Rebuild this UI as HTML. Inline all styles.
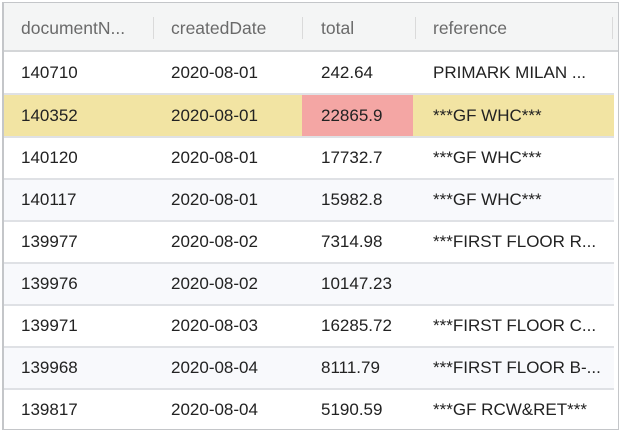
<!DOCTYPE html><html><head><style>
body{margin:0;width:622px;height:433px;background:#fff;font-family:"Liberation Sans",sans-serif;overflow:hidden}
.g{position:absolute;left:2px;top:2px;width:614px;height:426px;border:1px solid #c4c6c9;border-left-width:2px;overflow:hidden}
.h{height:47px;background:#f4f5f5;border-bottom:2px solid #d4d6d8;position:relative;color:#6a6a6a;font-size:17.5px}
.r{height:40px;border-bottom:2px solid #dfe1e5;position:relative;font-size:17px;color:#222;width:610px}
.r.t{height:41px}
.r.a{background:#f8f9fc}
.r.y{background:#f2e4a3}
.c{position:absolute;top:0;bottom:0;line-height:40px;white-space:nowrap}
.r.t .c{line-height:42px}
.h .c{line-height:50px}
.s{position:absolute;top:14px;width:1px;height:22px;background:#dadada}
.p{position:absolute;left:299px;width:111px;top:0;bottom:0;background:#f4a6a4}
</style></head><body><div class="g">
<div class="h"><span class="c" style="left:17px">documentN...</span><span class="s" style="left:149px"></span><span class="c" style="left:167px">createdDate</span><span class="s" style="left:298px"></span><span class="c" style="left:317px">total</span><span class="s" style="left:411px"></span><span class="c" style="left:429px">reference</span><span class="s" style="left:608px"></span></div>
<div class="r t"><span class="c" style="left:17px">140710</span><span class="c" style="left:167px">2020-08-01</span><span class="c" style="left:317px">242.64</span><span class="c" style="left:429px">PRIMARK MILAN ...</span></div>
<div class="r t y"><span class="p" style="left:298px"></span><span class="c" style="left:17px">140352</span><span class="c" style="left:167px">2020-08-01</span><span class="c" style="left:317px">22865.9</span><span class="c" style="left:429px">***GF WHC***</span></div>
<div class="r"><span class="c" style="left:17px">140120</span><span class="c" style="left:167px">2020-08-01</span><span class="c" style="left:317px">17732.7</span><span class="c" style="left:429px">***GF WHC***</span></div>
<div class="r a"><span class="c" style="left:17px">140117</span><span class="c" style="left:167px">2020-08-01</span><span class="c" style="left:317px">15982.8</span><span class="c" style="left:429px">***GF WHC***</span></div>
<div class="r"><span class="c" style="left:17px">139977</span><span class="c" style="left:167px">2020-08-02</span><span class="c" style="left:317px">7314.98</span><span class="c" style="left:429px">***FIRST FLOOR R...</span></div>
<div class="r a"><span class="c" style="left:17px">139976</span><span class="c" style="left:167px">2020-08-02</span><span class="c" style="left:317px">10147.23</span></div>
<div class="r"><span class="c" style="left:17px">139971</span><span class="c" style="left:167px">2020-08-03</span><span class="c" style="left:317px">16285.72</span><span class="c" style="left:429px">***FIRST FLOOR C...</span></div>
<div class="r a"><span class="c" style="left:17px">139968</span><span class="c" style="left:167px">2020-08-04</span><span class="c" style="left:317px">8111.79</span><span class="c" style="left:429px">***FIRST FLOOR B-...</span></div>
<div class="r"><span class="c" style="left:17px">139817</span><span class="c" style="left:167px">2020-08-04</span><span class="c" style="left:317px">5190.59</span><span class="c" style="left:429px">***GF RCW&amp;RET***</span></div>
</div></body></html>
